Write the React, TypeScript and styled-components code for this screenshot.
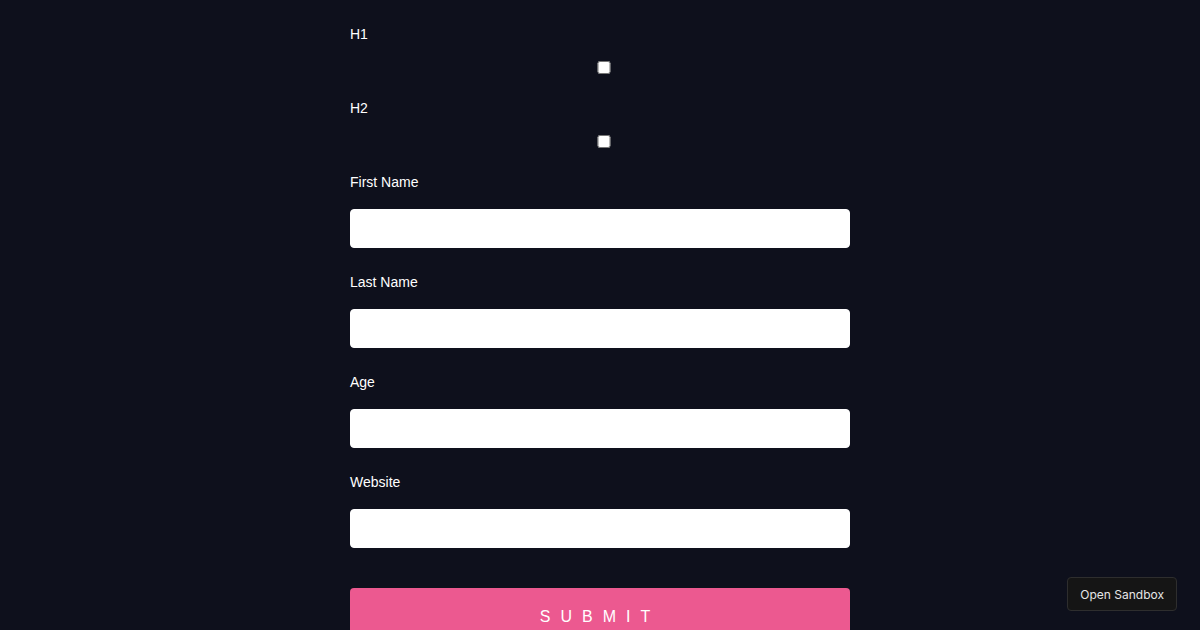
import React from "react";
import styled, { createGlobalStyle } from "styled-components";

const GlobalStyle = createGlobalStyle`
  body {
    margin: 0;
    background: #0e101c;
    font-family: "Liberation Sans", Arial, sans-serif;
  }
`;

const Page = styled.div`
  max-width: 600px;
  margin: 0 auto;
`;

const Form = styled.form`
  max-width: 500px;
  margin: 0 auto;
`;

const Label = styled.label`
  display: block;
  line-height: 2;
  text-align: left;
  margin-top: 20px;
  margin-bottom: 13px;
  color: white;
  font-size: 14px;
  font-weight: 200;
`;

const TextInput = styled.input`
  display: block;
  box-sizing: border-box;
  width: 100%;
  height: 39px;
  border-radius: 4px;
  border: 1px solid white;
  padding: 10px 15px;
  margin: 0 0 10px;
  font-size: 14px;
  font-family: "Liberation Sans", Arial, sans-serif;
  background: white;
`;

const Checkbox = styled.input`
  display: block;
  box-sizing: border-box;
  width: 100%;
  height: 13px;
  margin: 3px 3px 10px 4px;
  padding: 0;
`;

const Submit = styled.button`
  display: block;
  box-sizing: border-box;
  width: 100%;
  margin-top: 40px;
  padding: 20px;
  border: none;
  border-radius: 4px;
  background: #ec5990;
  color: white;
  text-transform: uppercase;
  font-family: "Liberation Sans", Arial, sans-serif;
  font-size: 16px;
  font-weight: 100;
  letter-spacing: 10px;
`;

const SandboxButton = styled.button`
  position: fixed;
  right: 23px;
  bottom: 19px;
  height: 34px;
  padding: 0 12px;
  background: #151515;
  color: #e6e6e6;
  border: 1px solid #2e2e2e;
  border-radius: 4px;
  font-family: Inter, "Liberation Sans", sans-serif;
  font-size: 12px;
`;

const checks = ["H1", "H2"];
const fields = ["First Name", "Last Name", "Age", "Website"];

export default function App() {
  return (
    <Page>
      <GlobalStyle />
      <Form onSubmit={(e) => e.preventDefault()}>
        {checks.map((name) => (
          <React.Fragment key={name}>
            <Label>{name}</Label>
            <Checkbox type="checkbox" name={name} />
          </React.Fragment>
        ))}
        {fields.map((name) => (
          <React.Fragment key={name}>
            <Label>{name}</Label>
            <TextInput type="text" name={name} />
          </React.Fragment>
        ))}
        <Submit type="submit">Submit</Submit>
      </Form>
      <SandboxButton type="button">Open Sandbox</SandboxButton>
    </Page>
  );
}
